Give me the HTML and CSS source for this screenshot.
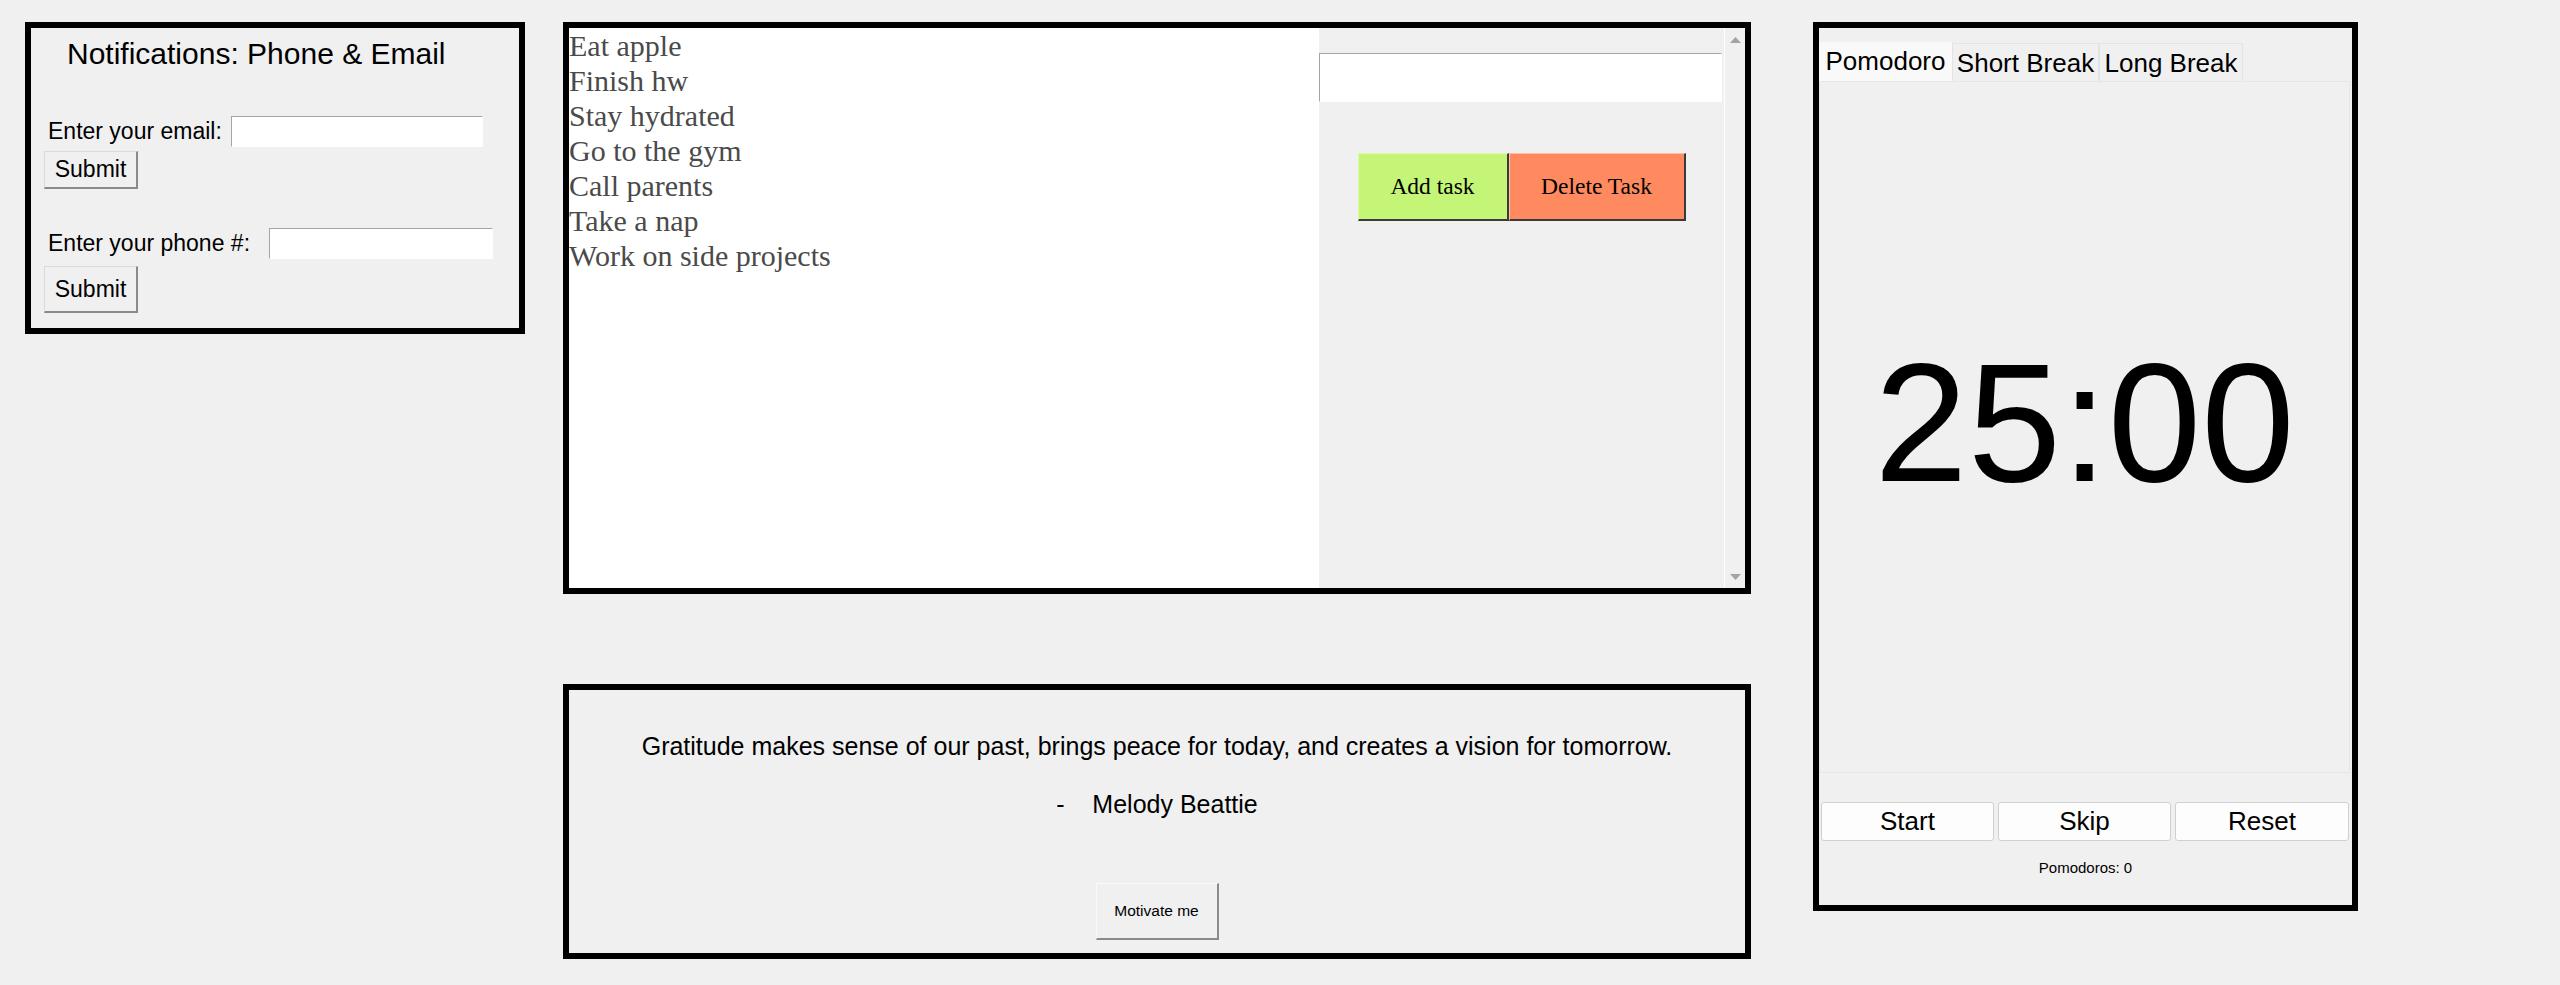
FILE: index.html
```html
<!DOCTYPE html>
<html lang="en">
<head>
    <meta charset="UTF-8">
    <meta name="viewport" content="width=device-width, initial-scale=1.0">
    <title>Productivity Dashboard</title>
    <link rel="stylesheet" href="styles.css">
</head>
<body>
    <div class="page">
        <!-- left column: email / sms notifications -->
        <section class="notify">
            <h1 class="notify-title">Notifications: Phone &amp; Email</h1>
            <div class="field email-field">
                <label for="email">Enter your email:</label>
                <input type="text" id="email">
            </div>
            <button class="submit">Submit</button>
            <div class="field phone-field">
                <label for="phone">Enter your phone #:</label>
                <input type="text" id="phone">
            </div>
            <button class="submit submit-tall">Submit</button>
        </section>

        <div class="middle">
            <!-- to-do list with entry and buttons -->
            <section class="tasks">
                <ul class="task-list">
                    <li>Eat apple</li>
                    <li>Finish hw</li>
                    <li>Stay hydrated</li>
                    <li>Go to the gym</li>
                    <li>Call parents</li>
                    <li>Take a nap</li>
                    <li>Work on side projects</li>
                </ul>
                <div class="task-side">
                    <input type="text" class="task-entry">
                    <div class="task-buttons">
                        <button class="add-btn">Add task</button>
                        <button class="delete-btn">Delete Task</button>
                    </div>
                </div>
                <div class="scrollbar">
                    <svg width="11" height="6" viewBox="0 0 11 6"><path d="M0 6 L5.5 0 L11 6 Z" fill="#a3a3a3"/></svg>
                    <svg width="11" height="6" viewBox="0 0 11 6"><path d="M0 0 L11 0 L5.5 6 Z" fill="#a3a3a3"/></svg>
                </div>
            </section>

            <!-- quote of the moment -->
            <section class="quote">
                <p class="quote-text">Gratitude makes sense of our past, brings peace for today, and creates a vision for tomorrow.</p>
                <p class="quote-author">-    Melody Beattie</p>
                <button class="motivate">Motivate me</button>
            </section>
        </div>

        <!-- right column: pomodoro timer -->
        <section class="timer">
            <div class="tabs">
                <div class="tab tab-active">Pomodoro</div>
                <div class="tab tab-short">Short Break</div>
                <div class="tab tab-long">Long Break</div>
            </div>
            <div class="pane">
                <span class="clock">25:00</span>
            </div>
            <div class="controls">
                <button class="ctrl ctrl-start">Start</button>
                <button class="ctrl ctrl-skip">Skip</button>
                <button class="ctrl ctrl-reset">Reset</button>
            </div>
            <p class="count">Pomodoros: 0</p>
        </section>
    </div>
</body>
</html>
```

FILE: styles.css
```css
*, *::before, *::after {
    box-sizing: border-box;
}

body {
    margin: 0;
    background-color: #f0f0f0;
    color: #000;
    font-family: "Liberation Sans", Arial, sans-serif;
}

.page {
    display: flex;
    align-items: flex-start;
    padding: 22px 0 0 25px;
}

button {
    font-family: inherit;
    color: #000;
    cursor: pointer;
}

/* ---------- notifications ---------- */
.notify {
    width: 500px;
    height: 312px;
    margin-right: 38px;
    padding: 0 0 0 13px;
    border: 6px solid #000;
}

.notify-title {
    margin: 8px 0 0 23px;
    font-size: 30px;
    font-weight: normal;
    line-height: 36px;
}

.field {
    display: flex;
    align-items: center;
    height: 31px;
    font-size: 23px;
}

.field label {
    margin-left: 4px;
}

.field input {
    height: 31px;
    border: 1px solid;
    border-color: #a5a5a5 #fff #fff #a5a5a5;
    background: #fff;
}

.email-field {
    margin-top: 44px;
}

.email-field input {
    width: 252px;
    margin-left: 9px;
}

.phone-field {
    margin-top: 39px;
}

.phone-field input {
    width: 224px;
    margin-left: 19px;
}

.submit {
    display: block;
    width: 94px;
    height: 38px;
    margin-top: 4px;
    padding: 0;
    border: 1px solid;
    border-color: #dadada #8a8a8a #8a8a8a #dadada;
    border-width: 1px 2px 2px 1px;
    background-color: #f0f0f0;
    font-size: 23px;
}

.submit-tall {
    height: 47px;
    margin-top: 7px;
}

/* ---------- tasks ---------- */
.middle {
    display: flex;
    flex-direction: column;
    width: 1188px;
    margin-right: 62px;
}

.tasks {
    display: flex;
    height: 572px;
    border: 6px solid #000;
}

.task-list {
    width: 750px;
    margin: 0;
    padding: 0;
    list-style: none;
    background-color: #fff;
    color: #4a4a4a;
    font-family: "Liberation Serif", "Times New Roman", serif;
    font-size: 30px;
    line-height: 35px;
}

.task-side {
    display: flex;
    flex-direction: column;
    align-items: center;
    width: 405px;
}

.task-entry {
    align-self: flex-start;
    width: 403px;
    height: 49px;
    margin-top: 25px;
    border: 1px solid;
    border-color: #a5a5a5 #fff #fff #a5a5a5;
    background: #fff;
}

.task-buttons {
    display: flex;
    margin-top: 51px;
}

.task-buttons button {
    height: 68px;
    padding: 0;
    border-style: solid;
    border-width: 1px 2px 2px 1px;
    font-family: "Liberation Serif", "Times New Roman", serif;
    font-size: 23.5px;
}

.add-btn {
    width: 151px;
    border-color: #dcfca6 #3a3a3a #3a3a3a #dcfca6;
    background-color: #c5f576;
}

.delete-btn {
    width: 177px;
    border-color: #ffc0a6 #3a3a3a #3a3a3a #ffc0a6;
    background-color: #ff8a5f;
}

.scrollbar {
    display: flex;
    flex-direction: column;
    justify-content: space-between;
    align-items: center;
    width: 21px;
    padding: 9px 0 8px;
    border-left: 1px solid #fff;
}

/* ---------- quote ---------- */
.quote {
    display: flex;
    flex-direction: column;
    align-items: center;
    height: 275px;
    margin-top: 90px;
    padding-top: 42px;
    border: 6px solid #000;
}

.quote p {
    margin: 0;
    font-size: 25px;
    line-height: 29px;
}

.quote-author {
    margin-top: 29px !important;
    white-space: pre;
}

.motivate {
    width: 123px;
    height: 57px;
    margin-top: 64px;
    padding: 0;
    border: 1px solid;
    border-color: #fafafa #8a8a8a #8a8a8a #fafafa;
    border-width: 1px 2px 2px 1px;
    background-color: #f0f0f0;
    font-size: 15.5px;
}

/* ---------- pomodoro ---------- */
.timer {
    display: flex;
    flex-direction: column;
    width: 545px;
    height: 889px;
    padding-top: 14px;
    border: 6px solid #000;
}

.tabs {
    display: flex;
    align-items: flex-end;
    height: 39px;
}

.tab {
    height: 38px;
    border: 1px solid #e3e3e3;
    border-bottom: none;
    font-size: 26px;
    line-height: 38px;
    text-align: center;
}

.tab-active {
    width: 133px;
    height: 39px;
    border-color: #f9f9f9;
    background-color: #f9f9f9;
    line-height: 36px;
}

.tab-short {
    width: 147px;
}

.tab-long {
    width: 144px;
}

.pane {
    display: flex;
    align-items: center;
    justify-content: center;
    width: 531px;
    height: 692px;
    border: 1px solid #e6e6e6;
}

.clock {
    position: relative;
    top: -4px;
    font-size: 168px;
    line-height: 1;
}

.controls {
    display: flex;
    gap: 4px;
    margin: 29px 0 0 2px;
}

.ctrl {
    width: 173px;
    height: 39px;
    padding: 0;
    border: 1px solid #d0d0d0;
    border-radius: 3px;
    background-color: #fdfdfd;
    font-size: 26px;
}

.ctrl-reset {
    width: 174px;
}

.count {
    margin: 18px 0 0;
    font-size: 15px;
    line-height: 17px;
    text-align: center;
}
```
